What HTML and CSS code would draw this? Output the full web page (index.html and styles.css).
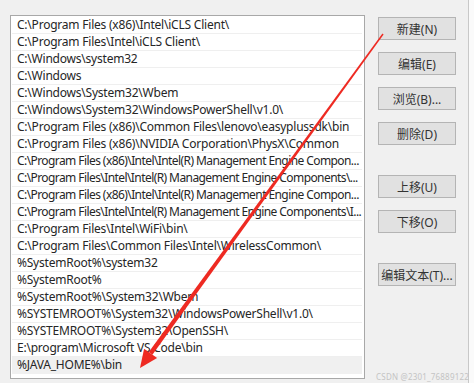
FILE: index.html
```html
<!DOCTYPE html>
<html lang="zh-CN">
<head>
<meta charset="UTF-8" />
<title>编辑环境变量</title>
<link rel="stylesheet" href="styles.css">
</head>
<body>

<div class="window">
  <ul class="path-list">
    <li>C:\Program Files (x86)\Intel\iCLS Client\</li>
    <li>C:\Program Files\Intel\iCLS Client\</li>
    <li>C:\Windows\system32</li>
    <li>C:\Windows</li>
    <li>C:\Windows\System32\Wbem</li>
    <li>C:\Windows\System32\WindowsPowerShell\v1.0\</li>
    <li>C:\Program Files (x86)\Common Files\lenovo\easyplussdk\bin</li>
    <li>C:\Program Files (x86)\NVIDIA Corporation\PhysX\Common</li>
    <li class="long">C:\Program Files (x86)\Intel\Intel(R) Management Engine Compon...</li>
    <li class="long">C:\Program Files\Intel\Intel(R) Management Engine Components\...</li>
    <li class="long">C:\Program Files (x86)\Intel\Intel(R) Management Engine Compon...</li>
    <li class="long">C:\Program Files\Intel\Intel(R) Management Engine Components\I...</li>
    <li>C:\Program Files\Intel\WiFi\bin\</li>
    <li>C:\Program Files\Common Files\Intel\WirelessCommon\</li>
    <li>%SystemRoot%\system32</li>
    <li>%SystemRoot%</li>
    <li>%SystemRoot%\System32\Wbem</li>
    <li>%SYSTEMROOT%\System32\WindowsPowerShell\v1.0\</li>
    <li>%SYSTEMROOT%\System32\OpenSSH\</li>
    <li>E:\program\Microsoft VS Code\bin</li>
    <li class="selected">%JAVA_HOME%\bin</li>
  </ul>

  <div class="actions">
    <div class="group">
      <button>新建(N)</button>
      <button>编辑(E)</button>
      <button>浏览(B)...</button>
      <button>删除(D)</button>
    </div>
    <div class="group">
      <button>上移(U)</button>
      <button>下移(O)</button>
    </div>
    <div class="group">
      <button>编辑文本(T)...</button>
    </div>
  </div>
</div>

<!-- 红色箭头标注 -->
<svg class="arrow" width="474" height="383" viewBox="0 0 474 383">
  <polygon points="383.6,34.5 382.4,33.5 148.8,352.1 152.4,354.7" fill="#ee2a22" />
  <polygon points="140,368 144.1,348.7 157.1,358.1" fill="#ee2a22" />
</svg>

<div class="watermark">CSDN @2301_76889122</div>

</body>
</html>
```

FILE: styles.css
```css
body { margin: 0; background: #fafafa; font-family: "Noto Sans", "Noto Sans CJK SC", sans-serif; font-size: 12px; color: #1a1a1a; }

.window { width: 469px; height: 383px; box-sizing: border-box; background: #f0f0f0; border-right: 1px solid #c8c8c8; padding: 15px 0 0 10px; display: flex; }

.path-list { list-style: none; margin: 0; padding: 1px 2px 0 1px; width: 355px; height: 364px; box-sizing: border-box; background: #fff; border: 1px solid #a8a8a8; overflow: hidden; }
.path-list li { height: 17px; line-height: 16px; border-bottom: 1px solid #efefef; box-sizing: border-box; padding-left: 5px; white-space: nowrap; overflow: hidden; letter-spacing: -0.22px; color: #262626; }
.path-list li.long { letter-spacing: -0.58px; }
.path-list li.selected { background: #f0f0f0; border-bottom-color: #f0f0f0; }

.actions { margin-left: 13px; padding-top: 2px; display: flex; flex-direction: column; gap: 30px; }
.actions .group { display: flex; flex-direction: column; gap: 12px; }
.actions button { width: 78px; height: 23px; margin: 0; padding: 0; background: #e1e1e1; border: 1px solid #b4b4b4; font-family: inherit; font-size: 12px; color: #333; }

.arrow { position: absolute; top: 0; left: 0; pointer-events: none; }

.watermark { position: absolute; right: 5px; bottom: 1px; font-size: 8px; color: #c4c4c4; letter-spacing: 0.2px; }
```
